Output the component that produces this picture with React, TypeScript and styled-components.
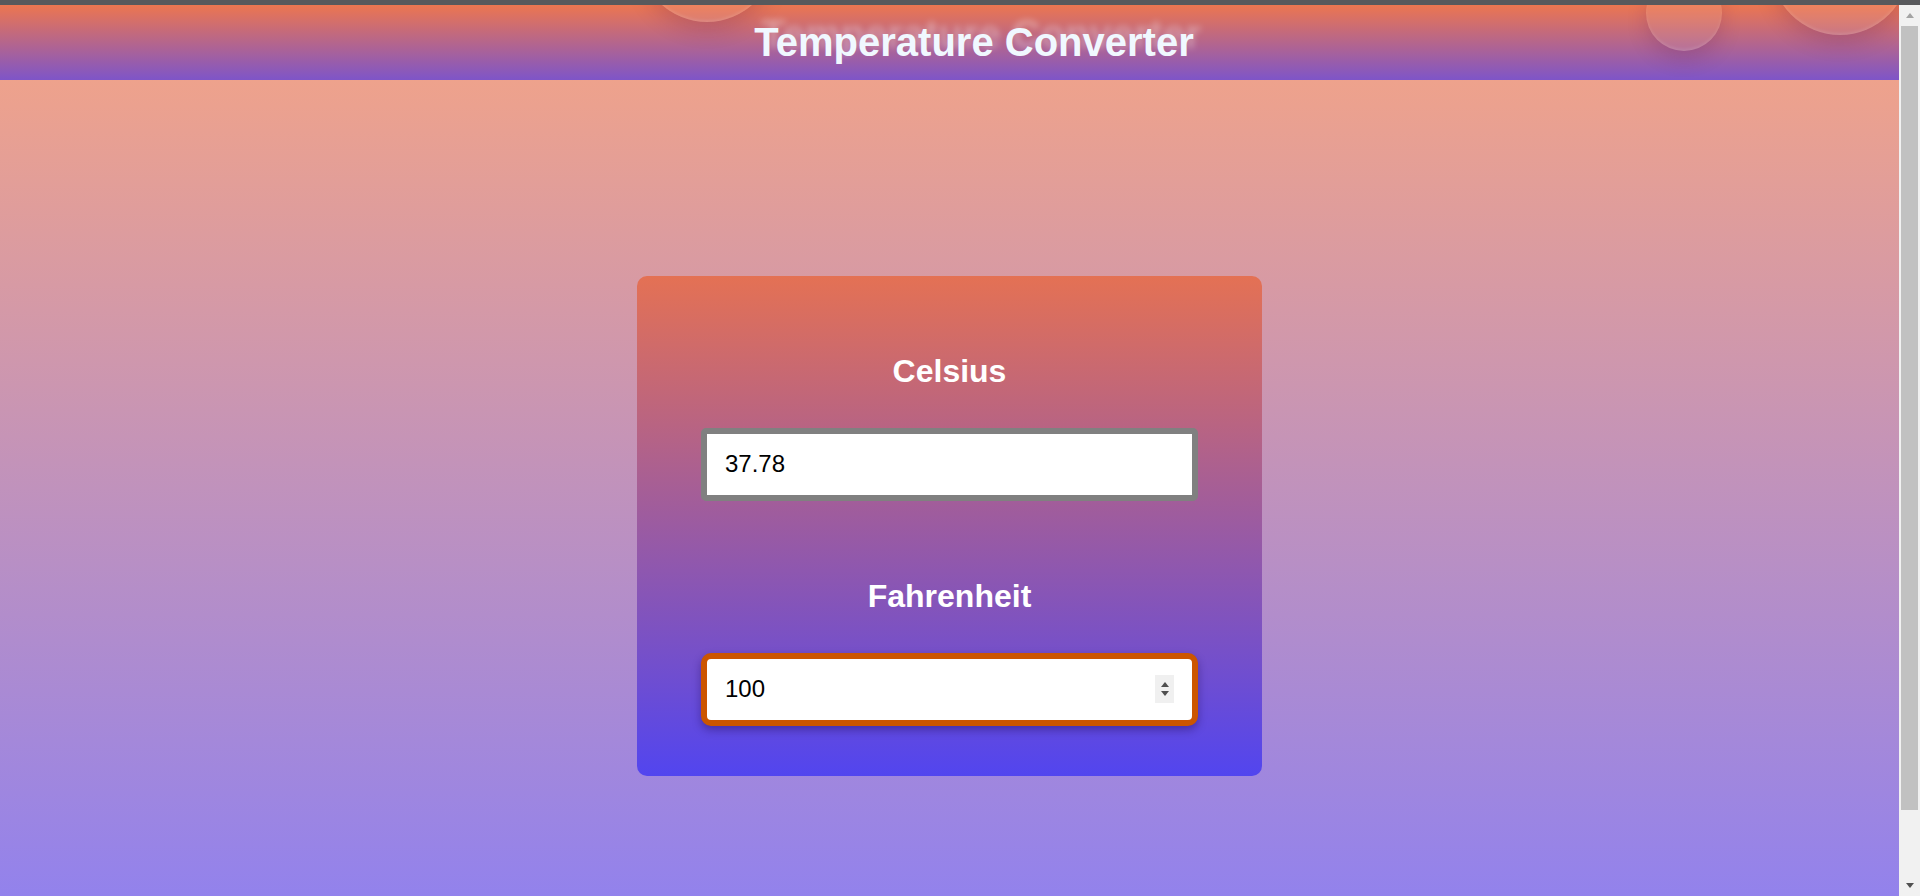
import React, { useState } from "react";
import styled, { createGlobalStyle } from "styled-components";

const GlobalStyle = createGlobalStyle`
  html, body {
    margin: 0;
    padding: 0;
    height: 100%;
    overflow: hidden;
  }
  body {
    font-family: "Liberation Sans", Arial, sans-serif;
    background: #58595c;
  }
  #root {
    height: 100%;
  }
`;

const Frame = styled.div`
  height: 100vh;
  display: flex;
  flex-direction: column;
  background: #58595c;
`;

const TopEdge = styled.div`
  flex: none;
  height: 5px;
  background: #58595c;
`;

const Window = styled.div`
  flex: 1;
  min-height: 0;
  display: flex;
`;

const Viewport = styled.div`
  flex: 1;
  min-width: 0;
  overflow: hidden;
`;

/* window scrollbar: up arrow, track with thumb, down arrow */
const ScrollBar = styled.div`
  flex: none;
  width: 21px;
  display: flex;
  flex-direction: column;
  background: #f1f1f1;
`;

const ScrollArrow = styled.div<{ $dir: "up" | "down"; $disabled?: boolean }>`
  flex: none;
  height: 21px;
  display: flex;
  align-items: center;
  justify-content: center;

  &::before {
    content: "";
    width: 0;
    height: 0;
    border-left: 4.5px solid transparent;
    border-right: 4.5px solid transparent;
    ${(p) => (p.$dir === "up" ? "border-bottom" : "border-top")}: 5px solid
      ${(p) => (p.$disabled ? "#a3a3a3" : "#505050")};
  }
`;

const ScrollTrack = styled.div`
  flex: 1;
  padding: 0 2px;
`;

const ScrollThumb = styled.div`
  height: 784px;
  background: #c1c1c1;
`;

const Header = styled.header`
  position: relative;
  height: 75px;
  box-sizing: border-box;
  padding: 0 0 2px 49px;
  display: flex;
  align-items: center;
  justify-content: center;
  overflow: hidden;
  background: linear-gradient(180deg, #ec7650 0%, #7e55c8 100%);
`;

const Bubble = styled.span<{ $d: number; $x: number; $y: number }>`
  position: absolute;
  width: ${(p) => p.$d}px;
  height: ${(p) => p.$d}px;
  left: ${(p) => p.$x - p.$d / 2}px;
  top: ${(p) => p.$y - p.$d / 2}px;
  border-radius: 50%;
  background: rgba(255, 210, 180, 0.14);
  box-shadow: 0 8px 20px rgba(90, 20, 70, 0.2), inset 0 -2px 3px rgba(255, 255, 255, 0.1);
  pointer-events: none;
`;

const Title = styled.h1`
  position: relative;
  margin: 0;
  font-size: 40px;
  font-weight: 700;
  line-height: 46px;
  color: #f0f8ff;
  text-shadow: 7px -8px 6px rgba(255, 255, 255, 0.3);
`;

const Main = styled.main`
  min-height: calc(100vh - 5px);
  display: flex;
  align-items: center;
  justify-content: center;
  background: linear-gradient(180deg, #eea28c 0%, #8a7ff5 100%);
`;

const Card = styled.section`
  width: 625px;
  box-sizing: border-box;
  padding: 77px 64px 50px;
  border-radius: 10px;
  display: flex;
  flex-direction: column;
  gap: 77px;
  background: linear-gradient(180deg, #e47154 0%, #5245ef 100%);
`;

const Field = styled.div`
  display: flex;
  flex-direction: column;
  align-items: center;
`;

const Label = styled.label`
  margin: 0 0 39px;
  font-size: 32px;
  font-weight: 700;
  line-height: 36px;
  color: #ffffff;
`;

const InputWrap = styled.div`
  position: relative;
  width: 100%;
`;

const NumberInput = styled.input<{ $active?: boolean }>`
  display: block;
  width: 100%;
  height: 73px;
  box-sizing: border-box;
  padding: 0 44px 0 18px;
  border: 6px solid ${(p) => (p.$active ? "#cc5500" : "#808080")};
  border-radius: ${(p) => (p.$active ? "10px" : "5px")};
  box-shadow: ${(p) => (p.$active ? "0 4px 8px rgba(30, 10, 80, 0.4)" : "none")};
  background: #ffffff;
  font-family: "Liberation Sans", Arial, sans-serif;
  font-size: 24px;
  color: #000000;
  outline: none;
  -moz-appearance: textfield;

  &::-webkit-inner-spin-button,
  &::-webkit-outer-spin-button {
    -webkit-appearance: none;
    margin: 0;
  }
`;

const Stepper = styled.div`
  position: absolute;
  right: 24px;
  top: 50%;
  transform: translateY(-50%);
  width: 19px;
  height: 28px;
  display: flex;
  flex-direction: column;
  background: #f0f0f0;
`;

const StepButton = styled.button<{ $dir: "up" | "down" }>`
  flex: 1;
  padding: 0;
  border: 0;
  background: transparent;
  cursor: default;
  display: flex;
  align-items: ${(p) => (p.$dir === "up" ? "flex-end" : "flex-start")};
  justify-content: center;
  padding-${(p) => (p.$dir === "up" ? "bottom" : "top")}: 2px;

  &::before {
    content: "";
    width: 0;
    height: 0;
    border-left: 4.5px solid transparent;
    border-right: 4.5px solid transparent;
    ${(p) => (p.$dir === "up" ? "border-bottom" : "border-top")}: 5px solid #4f4f4f;
  }
`;

const round = (n: number) => String(Math.round(n * 100) / 100);

export default function App() {
  const [celsius, setCelsius] = useState("37.78");
  const [fahrenheit, setFahrenheit] = useState("100");

  const onCelsius = (v: string) => {
    setCelsius(v);
    const n = parseFloat(v);
    setFahrenheit(Number.isNaN(n) ? "" : round((n * 9) / 5 + 32));
  };

  const onFahrenheit = (v: string) => {
    setFahrenheit(v);
    const n = parseFloat(v);
    setCelsius(Number.isNaN(n) ? "" : round(((n - 32) * 5) / 9));
  };

  const stepFahrenheit = (delta: number) => {
    const n = parseFloat(fahrenheit);
    onFahrenheit(String((Number.isNaN(n) ? 0 : n) + delta));
  };

  return (
    <>
      <GlobalStyle />
      <Frame>
        <TopEdge />
        <Window>
          <Viewport>
            <Header>
              <Bubble $d={136} $x={707} $y={-51} />
              <Bubble $d={76} $x={1684} $y={8} />
              <Bubble $d={138} $x={1840} $y={-39} />
              <Title>Temperature Converter</Title>
            </Header>
            <Main>
              <Card>
                <Field>
                  <Label htmlFor="celsius">Celsius</Label>
                  <InputWrap>
                    <NumberInput
                      id="celsius"
                      type="number"
                      value={celsius}
                      onChange={(e) => onCelsius(e.target.value)}
                    />
                  </InputWrap>
                </Field>
                <Field>
                  <Label htmlFor="fahrenheit">Fahrenheit</Label>
                  <InputWrap>
                    <NumberInput
                      id="fahrenheit"
                      type="number"
                      $active
                      value={fahrenheit}
                      onChange={(e) => onFahrenheit(e.target.value)}
                    />
                    <Stepper>
                      <StepButton $dir="up" aria-label="Increase" onClick={() => stepFahrenheit(1)} />
                      <StepButton $dir="down" aria-label="Decrease" onClick={() => stepFahrenheit(-1)} />
                    </Stepper>
                  </InputWrap>
                </Field>
              </Card>
            </Main>
          </Viewport>
          <ScrollBar>
            <ScrollArrow $dir="up" $disabled />
            <ScrollTrack>
              <ScrollThumb />
            </ScrollTrack>
            <ScrollArrow $dir="down" />
          </ScrollBar>
        </Window>
      </Frame>
    </>
  );
}
